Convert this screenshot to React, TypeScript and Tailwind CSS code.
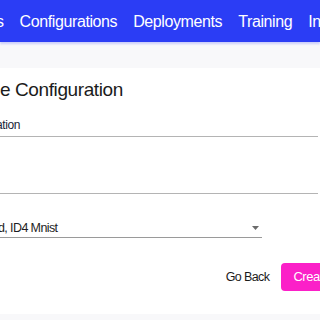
const navItems = ["s", "Configurations", "Deployments", "Training", "In"];

function NavBar() {
  return (
    <header className="relative z-10 flex h-[42px] shrink-0 items-center gap-[16px] bg-[#2b3df5] pt-[1px] text-[16px] tracking-[-0.4px] text-white shadow-[0_2px_2px_rgba(120,130,250,0.35)]">
      {navItems.map((item, i) => (
        <span
          key={item}
          className={i === 0 ? "-ml-[4px] whitespace-nowrap" : "whitespace-nowrap"}
        >
          {item}
        </span>
      ))}
    </header>
  );
}

function SelectField({ value }: { value: string }) {
  return (
    <div className="mt-[26px] flex w-[262px] items-center justify-between border-b border-[#9a9a9a] pb-[1px] text-[12.5px] leading-[16px] tracking-[-0.6px] text-[#1d1d24]">
      <span className="-ml-[2px] whitespace-nowrap">{value}</span>
      <svg width="7" height="4" viewBox="0 0 7 4" className="mr-[3px]">
        <path d="M0 0h7L3.5 4z" fill="#6b6b6b" />
      </svg>
    </div>
  );
}

export default function App() {
  return (
    <div
      className="flex h-[320px] w-[320px] flex-col overflow-hidden bg-[#f8f8fa]"
      style={{ fontFamily: '"Liberation Sans", Arial, sans-serif' }}
    >
      <NavBar />
      <main className="pt-[26px]">
        <section className="flex h-[246px] w-[340px] flex-col bg-white pt-[10px]">
          <h1 className="whitespace-nowrap text-[19px] leading-[23px] tracking-[-0.4px] text-[#1b1b1b]">
            e Configuration
          </h1>

          <div className="mt-[16px] w-[318px] border-b border-[#b4b4b4] pb-[3px] text-[12px] leading-[16px] tracking-[-0.4px] text-[#1a1f38]">
            <span className="-ml-[4px] whitespace-nowrap">ation</span>
          </div>

          <div className="h-[57px] w-[318px] border-b border-[#b4b4b4]" />

          <SelectField value="d, ID4 Mnist" />

          <div className="mt-[25px] flex items-center justify-end gap-[12px]">
            <button
              type="button"
              className="whitespace-nowrap text-[12.5px] tracking-[-0.6px] text-[#1b1b1b]"
            >
              Go Back
            </button>
            <button
              type="button"
              className="mr-[-2px] h-[28px] whitespace-nowrap rounded-[4px] bg-[#fb20c8] px-[12px] text-[13px] tracking-[-0.4px] text-white"
            >
              Create
            </button>
          </div>
        </section>
      </main>
    </div>
  );
}
